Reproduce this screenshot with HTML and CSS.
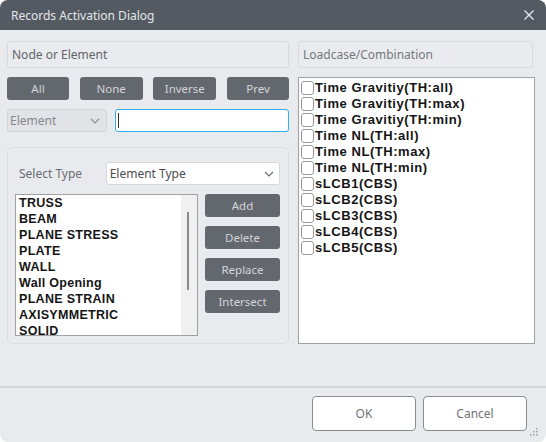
FILE: index.html
```html
<!DOCTYPE html>
<html>
<head>
<meta charset="utf-8">
<link rel="stylesheet" href="styles.css">
</head>
<body>
<div class="dialog">
  <div class="titlebar">
    <span class="title">Records Activation Dialog</span>
    <svg class="close" width="12" height="12" viewBox="0 0 12 12"><path d="M1.5 1.5 L10.5 10.5 M10.5 1.5 L1.5 10.5" stroke="#e8e9ec" stroke-width="1.3" fill="none"/></svg>
  </div>
  <div class="content">
    <div class="col-left">
      <div class="header-box">Node or Element</div>
      <div class="btn-row">
        <div class="btn">All</div>
        <div class="btn">None</div>
        <div class="btn">Inverse</div>
        <div class="btn">Prev</div>
      </div>
      <div class="sel-row">
        <div class="combo disabled"><span>Element</span><svg width="10" height="6" viewBox="0 0 10 6"><path d="M1 1 L5 5 L9 1" stroke="#8a8d92" stroke-width="1.2" fill="none"/></svg></div>
        <div class="text-input"><span class="caret"></span></div>
      </div>
      <div class="group">
        <div class="type-row">
          <span class="type-label">Select Type</span>
          <div class="combo white"><span>Element Type</span><svg width="10" height="6" viewBox="0 0 10 6"><path d="M1 1 L5 5 L9 1" stroke="#6a6d72" stroke-width="1.2" fill="none"/></svg></div>
        </div>
        <div class="list-row">
          <div class="type-list">
            <div class="items">
              <div>TRUSS</div>
              <div>BEAM</div>
              <div>PLANE STRESS</div>
              <div>PLATE</div>
              <div>WALL</div>
              <div>Wall Opening</div>
              <div>PLANE STRAIN</div>
              <div>AXISYMMETRIC</div>
              <div>SOLID</div>
            </div>
            <div class="scrollbar"><div class="thumb"></div></div>
          </div>
          <div class="side-btns">
            <div class="btn">Add</div>
            <div class="btn">Delete</div>
            <div class="btn">Replace</div>
            <div class="btn">Intersect</div>
          </div>
        </div>
      </div>
    </div>
    <div class="col-right">
      <div class="header-box">Loadcase/Combination</div>
      <div class="lc-list">
        <div class="lc"><span class="cb"></span>Time Gravitiy(TH:all)</div>
        <div class="lc"><span class="cb"></span>Time Gravitiy(TH:max)</div>
        <div class="lc"><span class="cb"></span>Time Gravitiy(TH:min)</div>
        <div class="lc"><span class="cb"></span>Time NL(TH:all)</div>
        <div class="lc"><span class="cb"></span>Time NL(TH:max)</div>
        <div class="lc"><span class="cb"></span>Time NL(TH:min)</div>
        <div class="lc"><span class="cb"></span>sLCB1(CBS)</div>
        <div class="lc"><span class="cb"></span>sLCB2(CBS)</div>
        <div class="lc"><span class="cb"></span>sLCB3(CBS)</div>
        <div class="lc"><span class="cb"></span>sLCB4(CBS)</div>
        <div class="lc"><span class="cb"></span>sLCB5(CBS)</div>
      </div>
    </div>
  </div>
  <div class="footer">
    <div class="fbtn">OK</div>
    <div class="fbtn">Cancel</div>
    <svg class="grip" width="8" height="8" viewBox="0 0 8 8"><g fill="#9a9ca0"><rect x="6" y="0" width="1.5" height="1.5"/><rect x="3" y="3" width="1.5" height="1.5"/><rect x="6" y="3" width="1.5" height="1.5"/><rect x="0" y="6" width="1.5" height="1.5"/><rect x="3" y="6" width="1.5" height="1.5"/><rect x="6" y="6" width="1.5" height="1.5"/></g></svg>
  </div>
</div>
</body>
</html>
```
FILE: styles.css
```css
html, body {
  margin: 0;
  padding: 0;
  background: #ffffff;
}
body {
  font-family: "Noto Sans", "Open Sans", sans-serif;
  font-size: 12px;
  color: #666;
}
.dialog {
  width: 546px;
  height: 442px;
  background: #e9eaee;
  border-radius: 8px;
  overflow: hidden;
  display: flex;
  flex-direction: column;
  position: relative;
}
.titlebar {
  height: 30px;
  flex: none;
  background: #545a61;
  display: flex;
  align-items: center;
  justify-content: space-between;
  padding: 0 11px 0 11px;
}
.title {
  color: #e4e6e9;
  font-size: 12px;
}
.content {
  display: flex;
  gap: 9px;
  padding: 11px 12px 0 7px;
  height: 303px;
  flex: none;
}
.col-left {
  width: 282px;
  display: flex;
  flex-direction: column;
}
.col-right {
  width: 237px;
  display: flex;
  flex-direction: column;
}
.header-box {
  height: 27px;
  box-sizing: border-box;
  border: 1px solid #d9dadf;
  border-radius: 3px;
  background: #eaebef;
  display: flex;
  align-items: center;
  padding-left: 4px;
  color: #606368;
  font-size: 12px;
}
.col-right .header-box {
  width: 235px;
  color: #75787d;
}
.btn-row {
  display: flex;
  justify-content: space-between;
  margin-top: 9px;
}
.btn {
  height: 23px;
  box-sizing: border-box;
  background: #63676e;
  border-radius: 3px;
  color: #d3d5d8;
  display: flex;
  align-items: center;
  justify-content: center;
  font-size: 11.5px;
}
.btn-row .btn {
  width: 62px;
}
.btn-row .btn:nth-child(2),
.btn-row .btn:nth-child(3) {
  width: 63px;
}
.sel-row {
  display: flex;
  gap: 8px;
  margin-top: 9px;
}
.combo {
  height: 23px;
  box-sizing: border-box;
  border-radius: 3px;
  display: flex;
  align-items: center;
  justify-content: space-between;
  padding: 0 6px 0 2px;
  font-size: 12px;
}
.combo.disabled {
  width: 100px;
  background: #e2e3e7;
  border: 1px solid #d3d4d8;
  color: #85888d;
}
.text-input {
  width: 174px;
  height: 23px;
  box-sizing: border-box;
  border: 1px solid #2fb0ee;
  border-radius: 3px;
  background: #fff;
  display: flex;
  align-items: center;
  padding-left: 2px;
}
.caret {
  width: 1px;
  height: 15px;
  background: #333;
}
.group {
  margin-top: 15px;
  height: 197px;
  box-sizing: border-box;
  border: 1px solid #dcdde1;
  border-radius: 5px;
  background: #e9eaee;
  padding: 14px 8px 0 7px;
}
.type-row {
  display: flex;
  align-items: center;
  height: 23px;
}
.type-label {
  width: 87px;
  padding-left: 4px;
  color: #6a6d72;
  font-size: 12px;
}
.combo.white {
  width: 175px;
  background: #fff;
  border: 1px solid #d7d8dc;
  color: #4a4c50;
  padding-left: 3px;
  padding-right: 5px;
}
.list-row {
  display: flex;
  margin-top: 9px;
  gap: 7px;
}
.type-list {
  width: 184px;
  height: 142px;
  box-sizing: border-box;
  border: 1px solid #9fa1a5;
  background: #fff;
  display: flex;
  overflow: hidden;
}
.items {
  flex: 1;
  font-family: "Liberation Sans", Arial, sans-serif;
  font-weight: bold;
  font-size: 12.5px;
  letter-spacing: 0.3px;
  color: #151515;
  padding-left: 3px;
  line-height: 16px;
}
.scrollbar {
  width: 16px;
  background: #f0f0f0;
  position: relative;
  flex: none;
}
.thumb {
  position: absolute;
  left: 6px;
  top: 17px;
  width: 2px;
  height: 78px;
  background: #8a8a8a;
}
.side-btns {
  display: flex;
  flex-direction: column;
  gap: 9px;
}
.side-btns .btn {
  width: 75px;
}
.lc-list {
  margin-top: 9px;
  width: 237px;
  height: 268px;
  box-sizing: border-box;
  border: 1px solid #9fa1a5;
  background: #fff;
  padding-top: 2px;
  padding-left: 2px;
  font-family: "Liberation Sans", Arial, sans-serif;
  font-weight: bold;
  font-size: 13px;
  letter-spacing: 0.55px;
  color: #151515;
}
.lc {
  height: 16px;
  display: flex;
  align-items: center;
}
.cb {
  width: 11px;
  height: 12px;
  border: 1px solid #96989c;
  border-radius: 3px;
  background: #fff;
  margin-right: 1px;
  flex: none;
}
.footer {
  margin-top: 42px;
  border-top: 2px solid #d3d4d8;
  flex: 1;
  display: flex;
  justify-content: flex-end;
  align-items: flex-start;
  gap: 7px;
  padding: 8px 19px 0 0;
  position: relative;
}
.fbtn {
  width: 104px;
  height: 35px;
  box-sizing: border-box;
  background: #fff;
  border: 1px solid #8b8d92;
  border-radius: 4px;
  display: flex;
  align-items: center;
  justify-content: center;
  color: #707276;
  font-size: 12px;
}
.grip {
  position: absolute;
  right: 8px;
  bottom: 6px;
}
```
